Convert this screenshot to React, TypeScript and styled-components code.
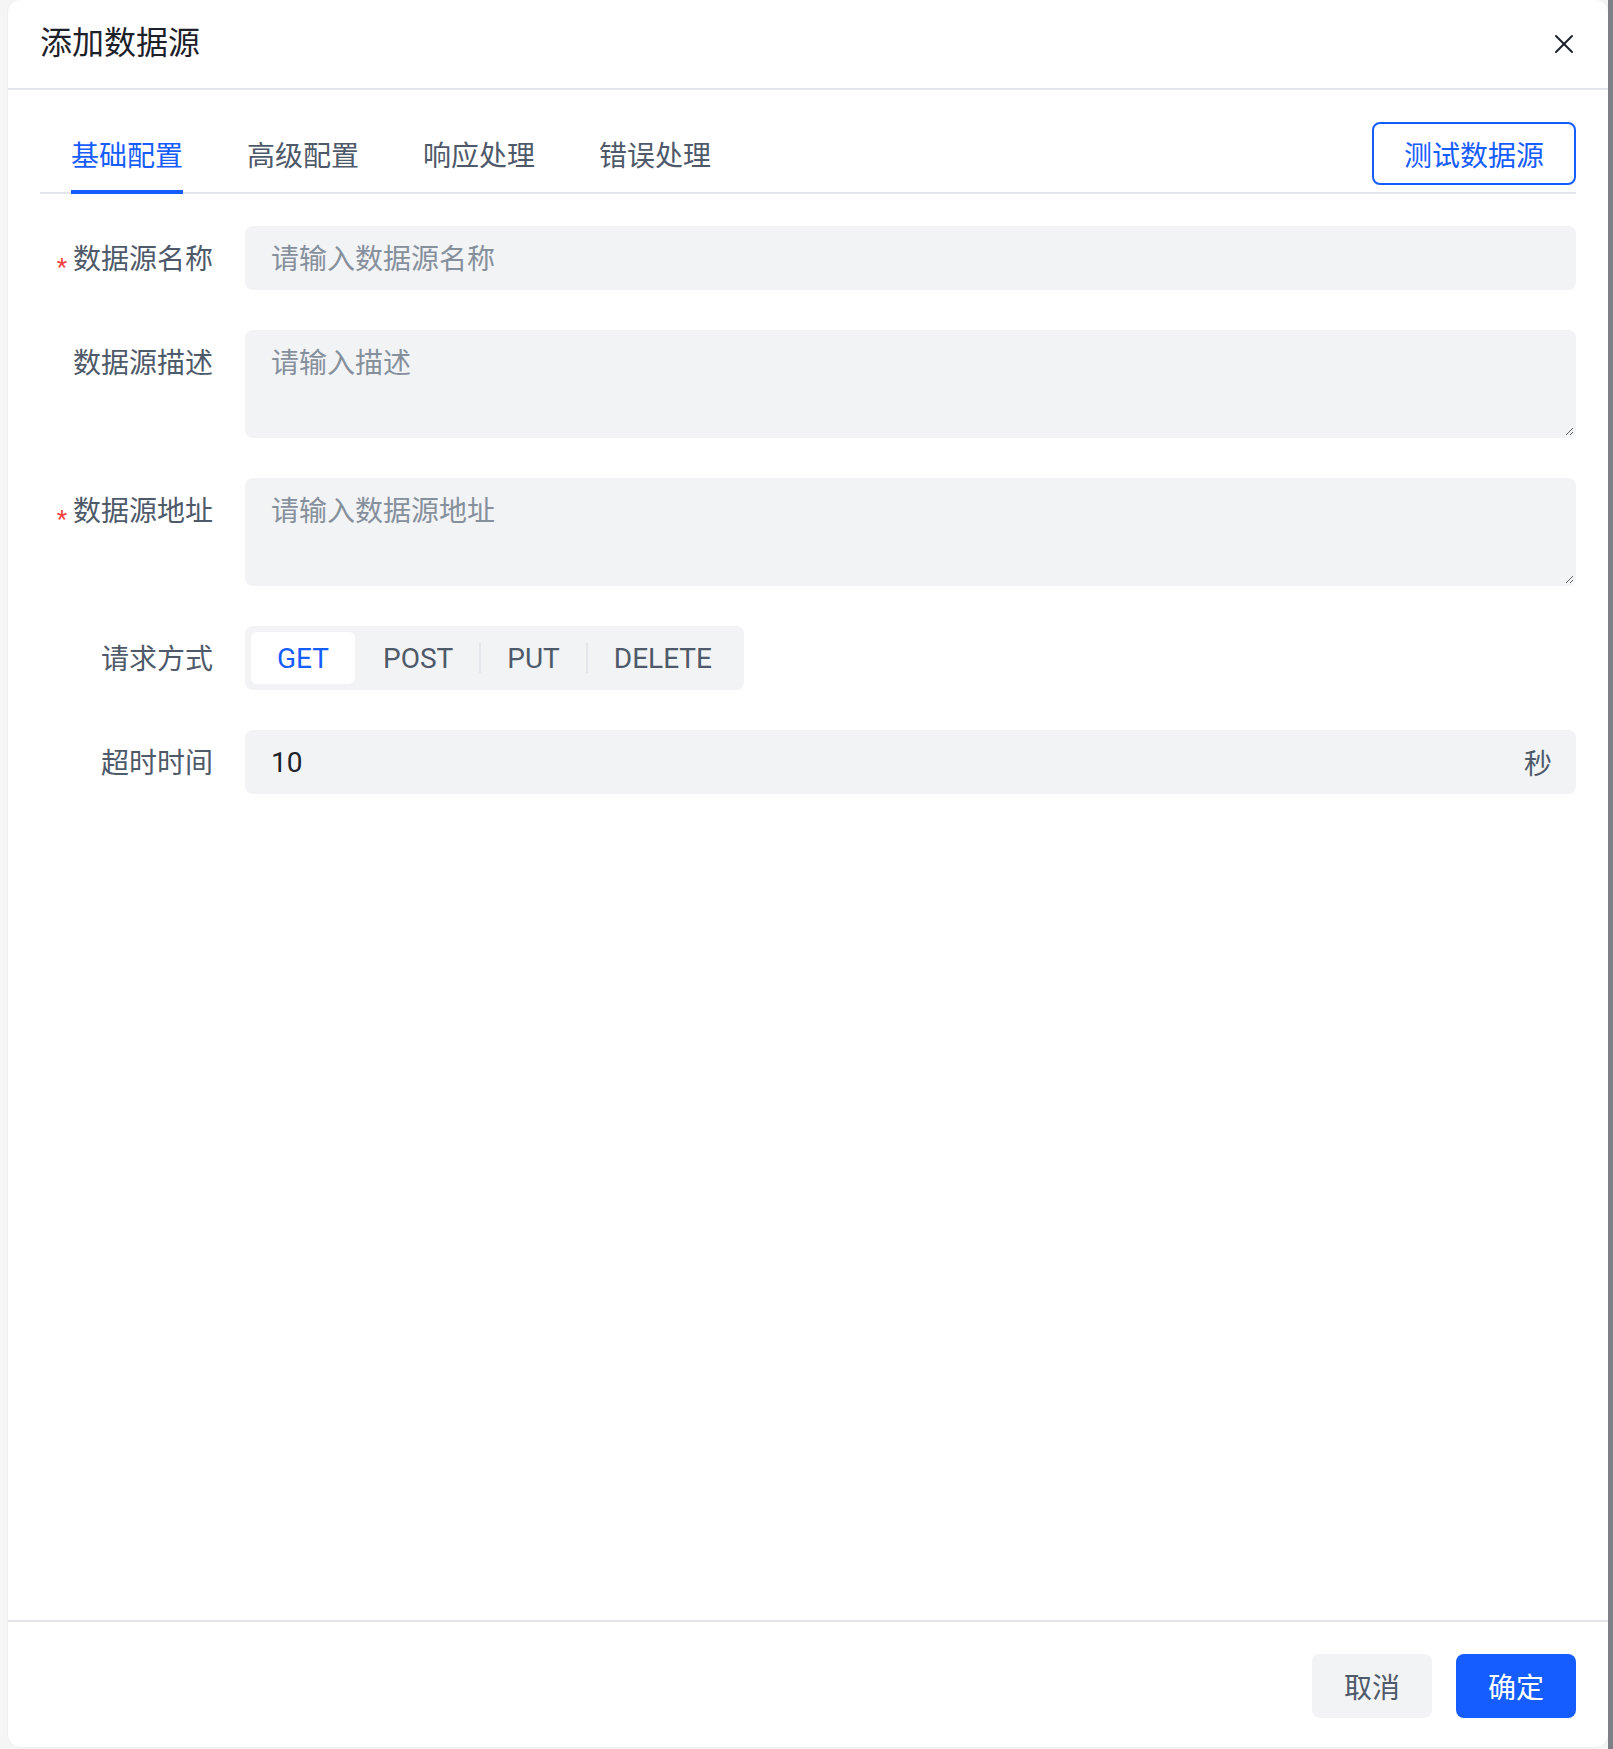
import { useState } from 'react';
import styled, { createGlobalStyle } from 'styled-components';
import { X } from 'lucide-react';

const GlobalStyle = createGlobalStyle`
  html, body {
    margin: 0;
    padding: 0;
    background: #f5f5f6;
  }
  * {
    box-sizing: border-box;
  }
  body {
    font-family: Roboto, "Noto Sans CJK SC", sans-serif;
  }
`;

const methods = ['GET', 'POST', 'PUT', 'DELETE'];
const tabs = ['基础配置', '高级配置', '响应处理', '错误处理'];

const App = () => {
  const [activeTab, setActiveTab] = useState(0);
  const [method, setMethod] = useState('GET');
  const [timeout, setTimeoutValue] = useState('10');

  return (
    <Page>
      <GlobalStyle />
      <Modal>
        <Header>
          <Title>添加数据源</Title>
          <CloseButton aria-label="close">
            <X size={32} strokeWidth={1.5} />
          </CloseButton>
        </Header>

        <Body>
          <TabBar>
            <TabList>
              {tabs.map((tab, i) => (
                <Tab key={tab} $active={i === activeTab} onClick={() => setActiveTab(i)}>
                  {tab}
                </Tab>
              ))}
            </TabList>
            <OutlineButton>测试数据源</OutlineButton>
          </TabBar>

          <Form>
            <Row>
              <Label $required>数据源名称</Label>
              <Input placeholder="请输入数据源名称" />
            </Row>
            <Row>
              <Label>数据源描述</Label>
              <TextArea placeholder="请输入描述" />
            </Row>
            <Row>
              <Label $required>数据源地址</Label>
              <TextArea placeholder="请输入数据源地址" />
            </Row>
            <Row>
              <Label>请求方式</Label>
              <Segmented>
                {methods.map((m, i) => (
                  <Segment
                    key={m}
                    $active={m === method}
                    $divider={i > 0 && m !== method && methods[i - 1] !== method}
                    onClick={() => setMethod(m)}
                  >
                    {m}
                  </Segment>
                ))}
              </Segmented>
            </Row>
            <Row>
              <Label>超时时间</Label>
              <InputGroup>
                <BareInput
                  value={timeout}
                  onChange={(e) => setTimeoutValue(e.target.value)}
                />
                <Suffix>秒</Suffix>
              </InputGroup>
            </Row>
          </Form>
        </Body>

        <Footer>
          <Button>取消</Button>
          <Button $primary>确定</Button>
        </Footer>
      </Modal>
      <Backdrop />
    </Page>
  );
};

export default App;

const Page = styled.div`
  display: flex;
  height: 1749px;
  padding-left: 8px;
  overflow: hidden;
`;

const Backdrop = styled.div`
  width: 5px;
  flex-shrink: 0;
  background: #7d8086;
`;

const Modal = styled.div`
  width: 1600px;
  height: 1747px;
  flex-shrink: 0;
  display: flex;
  flex-direction: column;
  background: #fff;
  border-radius: 12px;
  box-shadow: 0 0 2px rgba(0, 0, 0, 0.08);
`;

const Header = styled.div`
  height: 90px;
  display: flex;
  align-items: center;
  justify-content: space-between;
  padding: 0 32px;
  border-bottom: 2px solid #e5e6eb;
`;

const Title = styled.div`
  font-size: 32px;
  line-height: 48px;
  color: #1d2129;
  margin-top: -2px;
`;

const CloseButton = styled.button`
  display: flex;
  align-items: center;
  justify-content: center;
  width: 32px;
  height: 32px;
  margin-right: -4px;
  padding: 0;
  border: none;
  background: none;
  color: #1d2129;
  cursor: pointer;
`;

const Body = styled.div`
  flex: 1;
  padding: 0 32px;
`;

const TabBar = styled.div`
  height: 104px;
  display: flex;
  align-items: flex-end;
  justify-content: space-between;
  border-bottom: 2px solid #e5e6eb;
`;

const TabList = styled.div`
  display: flex;
  gap: 64px;
  padding-left: 31px;
`;

const Tab = styled.div<{ $active?: boolean }>`
  font-size: 28px;
  line-height: 44px;
  padding-bottom: 11px;
  margin-bottom: -2px;
  border-bottom: 4px solid ${(p) => (p.$active ? '#165dff' : 'transparent')};
  color: ${(p) => (p.$active ? '#165dff' : '#4e5969')};
  cursor: pointer;
`;

const OutlineButton = styled.button`
  width: 204px;
  height: 63px;
  margin-bottom: 7px;
  border: 2px solid #165dff;
  border-radius: 8px;
  background: #fff;
  color: #165dff;
  font-family: inherit;
  font-size: 28px;
  cursor: pointer;
`;

const Form = styled.div`
  display: flex;
  flex-direction: column;
  gap: 40px;
  padding-top: 32px;
`;

const Row = styled.div`
  display: flex;
  align-items: flex-start;
  gap: 32px;
`;

const Label = styled.label<{ $required?: boolean }>`
  width: 173px;
  height: 64px;
  flex-shrink: 0;
  padding-top: 2px;
  text-align: right;
  font-size: 28px;
  line-height: 64px;
  color: #4e5969;
  white-space: nowrap;

  &::before {
    content: ${(p) => (p.$required ? "'*'" : "''")};
    color: #f53f3f;
    font-size: 24px;
    margin-right: 6px;
    position: relative;
    top: 6px;
  }
`;

const fieldBase = `
  flex: 1;
  border: 2px solid transparent;
  border-radius: 8px;
  background: #f2f3f5;
  font-family: Roboto, "Noto Sans CJK SC", sans-serif;
  font-size: 28px;
  color: #1d2129;
  outline: none;

  &::placeholder {
    color: #86909c;
  }
`;

const Input = styled.input`
  ${fieldBase}
  height: 64px;
  padding: 2px 24px 0;
`;

const TextArea = styled.textarea`
  ${fieldBase}
  height: 108px;
  padding: 10px 24px;
  line-height: 44px;
  resize: vertical;
`;

const Segmented = styled.div`
  display: flex;
  align-items: center;
  height: 64px;
  padding: 6px;
  border-radius: 8px;
  background: #f2f3f5;
`;

const Segment = styled.div<{ $active?: boolean; $divider?: boolean }>`
  position: relative;
  height: 52px;
  display: flex;
  align-items: center;
  padding: 0 26px;
  margin-left: 2px;
  border-radius: 6px;
  font-size: 28px;
  background: ${(p) => (p.$active ? '#fff' : 'transparent')};
  color: ${(p) => (p.$active ? '#165dff' : '#4e5969')};
  cursor: pointer;

  &:first-child {
    margin-left: 0;
  }

  &::before {
    content: '';
    display: ${(p) => (p.$divider ? 'block' : 'none')};
    position: absolute;
    left: -2px;
    top: 11px;
    width: 2px;
    height: 30px;
    background: #e5e6eb;
  }
`;

const InputGroup = styled.div`
  flex: 1;
  display: flex;
  align-items: center;
  height: 64px;
  padding: 0 24px 0 26px;
  border-radius: 8px;
  background: #f2f3f5;
`;

const BareInput = styled.input`
  flex: 1;
  border: none;
  background: transparent;
  outline: none;
  padding: 0;
  font-family: Roboto, "Noto Sans CJK SC", sans-serif;
  font-size: 28px;
  color: #1d2129;
`;

const Suffix = styled.span`
  font-size: 28px;
  color: #4e5969;
`;

const Footer = styled.div`
  display: flex;
  justify-content: flex-end;
  gap: 24px;
  padding: 32px 32px 29px;
  border-top: 2px solid #e5e6eb;
`;

const Button = styled.button<{ $primary?: boolean }>`
  width: 120px;
  height: 64px;
  border: none;
  border-radius: 8px;
  font-family: inherit;
  font-size: 28px;
  background: ${(p) => (p.$primary ? '#165dff' : '#f2f3f5')};
  color: ${(p) => (p.$primary ? '#fff' : '#4e5969')};
  cursor: pointer;
`;
